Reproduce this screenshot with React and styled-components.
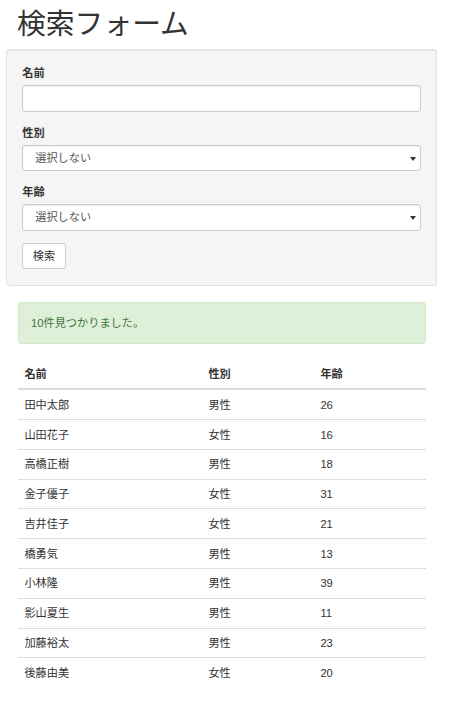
import React from 'react';
import styled, { createGlobalStyle } from 'styled-components';

const GlobalStyle = createGlobalStyle`
  * { box-sizing: border-box; }
  body {
    margin: 0;
    background: #fff;
    color: #333;
    font-family: "Liberation Sans", "Noto Sans CJK JP", sans-serif;
    font-size: 11.2px;
    line-height: 16px;
  }
`;

const people = [
  { name: '田中太郎', gender: '男性', age: 26 },
  { name: '山田花子', gender: '女性', age: 16 },
  { name: '高橋正樹', gender: '男性', age: 18 },
  { name: '金子優子', gender: '女性', age: 31 },
  { name: '吉井佳子', gender: '女性', age: 21 },
  { name: '橋勇気', gender: '男性', age: 13 },
  { name: '小林隆', gender: '男性', age: 39 },
  { name: '影山夏生', gender: '男性', age: 11 },
  { name: '加藤裕太', gender: '男性', age: 23 },
  { name: '後藤由美', gender: '女性', age: 20 },
];

const App = () => {
  return (
    <>
      <GlobalStyle />
      <Page>
        <Title>検索フォーム</Title>
        <Well>
          <FormGroup>
            <Label>名前</Label>
            <Input type="text" />
          </FormGroup>
          <FormGroup>
            <Label>性別</Label>
            <SelectWrap>
              <Select defaultValue="">
                <option value="">選択しない</option>
                <option value="m">男性</option>
                <option value="f">女性</option>
              </Select>
            </SelectWrap>
          </FormGroup>
          <FormGroup>
            <Label>年齢</Label>
            <SelectWrap>
              <Select defaultValue="">
                <option value="">選択しない</option>
                <option value="10">10代</option>
                <option value="20">20代</option>
                <option value="30">30代</option>
              </Select>
            </SelectWrap>
          </FormGroup>
          <Button type="button">検索</Button>
        </Well>

        <Results>
          <Alert>10件見つかりました。</Alert>
          <Table>
            <colgroup>
              <col style={{ width: '184px' }} />
              <col style={{ width: '112px' }} />
              <col />
            </colgroup>
            <thead>
              <tr>
                <Th>名前</Th>
                <Th>性別</Th>
                <Th>年齢</Th>
              </tr>
            </thead>
            <tbody>
              {people.map((p) => (
                <tr key={p.name}>
                  <Td>{p.name}</Td>
                  <Td>{p.gender}</Td>
                  <Td>{p.age}</Td>
                </tr>
              ))}
            </tbody>
          </Table>
        </Results>
      </Page>
    </>
  );
};

export default App;

const Page = styled.div`
  width: 474px;
  padding: 0 37px 20px 6px;
`;

const Title = styled.h1`
  margin: 8px 0 9px 11px;
  font-size: 28.8px;
  line-height: 32px;
  font-weight: 400;
  color: #333;
`;

const Well = styled.div`
  background: #f5f5f5;
  border: 1px solid #e3e3e3;
  border-radius: 3px;
  padding: 15.2px;
  margin-bottom: 16px;
  box-shadow: inset 0 1px 1px rgba(0, 0, 0, 0.05);
`;

const FormGroup = styled.div`
  margin-bottom: 12.8px;
`;

const Label = styled.label`
  display: block;
  font-weight: 700;
  margin-bottom: 4px;
`;

const Input = styled.input`
  display: block;
  width: 100%;
  height: 26.6px;
  padding: 0 10px;
  font: inherit;
  color: #555;
  background: #fff;
  border: 1px solid #ccc;
  border-radius: 3px;
  box-shadow: inset 0 1px 1px rgba(0, 0, 0, 0.075);
  outline: none;
`;

const SelectWrap = styled.div`
  position: relative;

  &::after {
    content: '';
    position: absolute;
    right: 5px;
    top: 50%;
    margin-top: -1px;
    border-left: 3px solid transparent;
    border-right: 3px solid transparent;
    border-top: 4px solid #333;
    pointer-events: none;
  }
`;

const Select = styled.select`
  display: block;
  width: 100%;
  height: 26.6px;
  padding: 0 10px 0 12px;
  font: inherit;
  color: #555;
  background: #fff;
  border: 1px solid #ccc;
  border-radius: 3px;
  box-shadow: inset 0 1px 1px rgba(0, 0, 0, 0.075);
  appearance: none;
  outline: none;
`;

const Button = styled.button`
  display: inline-block;
  height: 26px;
  padding: 0 9.6px;
  font: inherit;
  color: #333;
  background: #fff;
  border: 1px solid #ccc;
  border-radius: 3px;
  cursor: pointer;
`;

const Results = styled.div`
  margin: 0 11px 0 12px;
`;

const Alert = styled.div`
  padding: 12px;
  margin-bottom: 16px;
  color: #3c763d;
  background: #dff0d8;
  border: 1px solid #d6e9c6;
  border-radius: 3px;
`;

const Table = styled.table`
  width: 100%;
  border-collapse: collapse;
  border-spacing: 0;
  table-layout: fixed;
`;

const Th = styled.th`
  text-align: left;
  font-weight: 700;
  padding: 6.4px;
  line-height: 16px;
  border-bottom: 2px solid #ddd;
`;

const Td = styled.td`
  padding: 6.4px;
  line-height: 16px;
  border-top: 1px solid #ddd;
`;
